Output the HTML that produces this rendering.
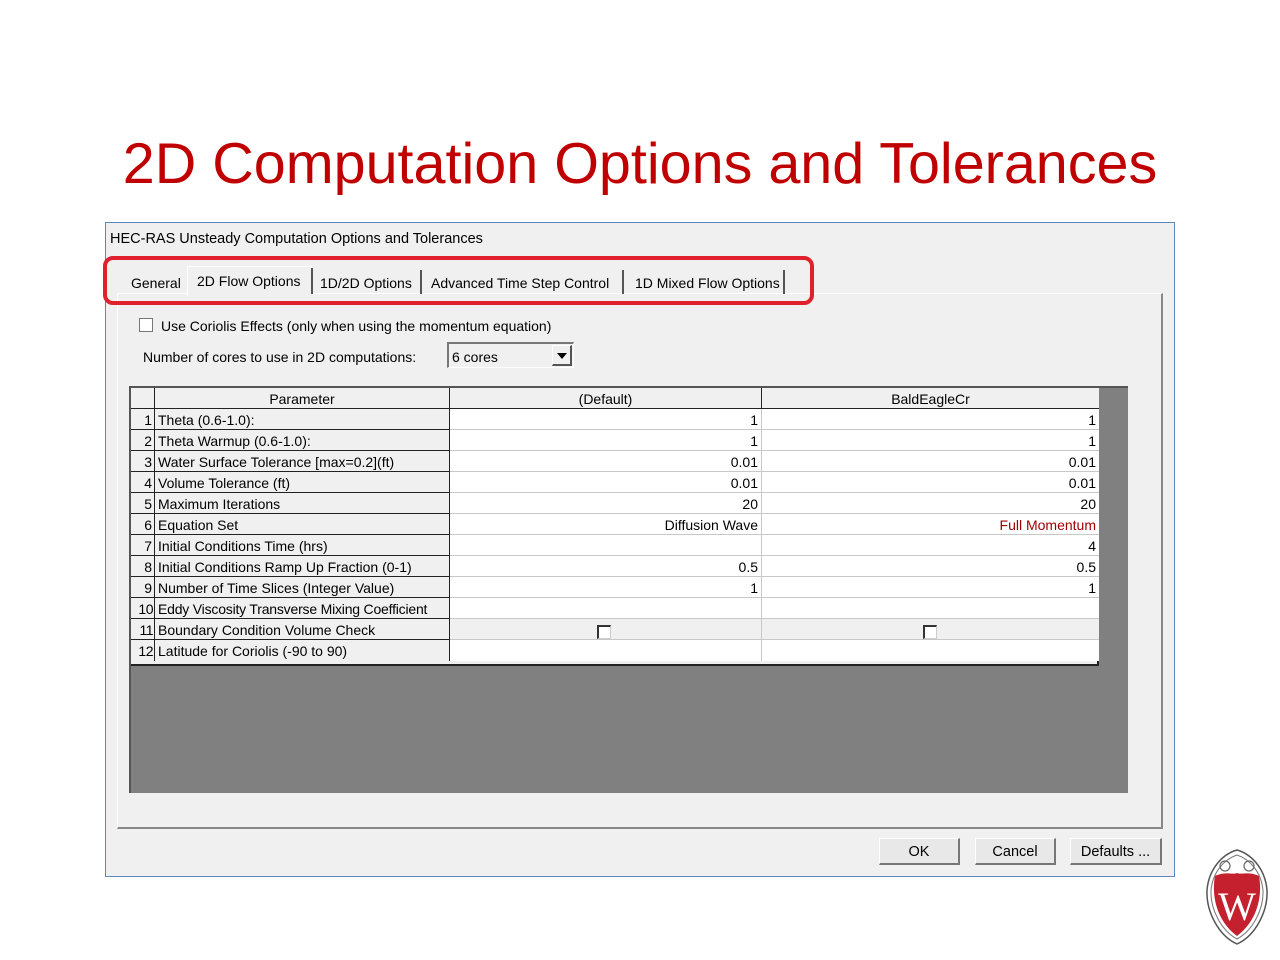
<!DOCTYPE html>
<html><head><meta charset="utf-8">
<style>
*{margin:0;padding:0;box-sizing:border-box}
body{width:1280px;height:960px;background:#fff;position:relative;overflow:hidden;font-family:"Liberation Sans",sans-serif;}
.a{position:absolute}
h1{position:absolute;left:0;width:1280px;top:131px;text-align:center;font-weight:normal;font-size:57.5px;color:#c00000;letter-spacing:0px}
.dlg{left:105px;top:222px;width:1070px;height:655px;border:1px solid #5a87c0;background:#f0f0f0}
.t{font-size:15px;color:#000;white-space:nowrap}
.tab{top:270px;height:26px;font-size:14px;padding-top:5px;white-space:nowrap}
.cell{position:absolute;height:21px;font-size:14px;line-height:23px;white-space:nowrap;overflow:hidden}
.hd{background:#f0f0f0;border-right:1px solid #222;border-bottom:1px solid #222}
.dc{background:#fff;border-right:1px solid #c8c8c8;border-bottom:1px solid #c8c8c8;text-align:right;padding-right:3px}
.btn{top:838px;height:27px;background:#e8e8e8;border-top:1px solid #fff;border-left:1px solid #fff;border-right:2px solid #777;border-bottom:2px solid #777;font-size:14.5px;text-align:center;line-height:26px}
</style></head><body>
<h1>2D Computation Options and Tolerances</h1>
<div class="a dlg"></div>
<div class="a t" style="left:110px;top:231px;font-size:14.5px">HEC-RAS Unsteady Computation Options and Tolerances</div>
<div class="a" style="left:117px;top:293px;width:1046px;height:536px;border-left:1px solid #fff;border-top:1px solid #fff;border-right:2px solid #888;border-bottom:2px solid #888"></div>
<div class="a" style="left:187px;top:266px;width:125px;height:30px;background:#f0f0f0;border-left:1px solid #fff;border-top:1px solid #fff"></div>
<div class="a tab" style="left:131px">General</div>
<div class="a tab" style="left:197px;top:268px">2D Flow Options</div>
<div class="a" style="left:311px;top:268px;width:2px;height:26px;background:#555"></div>
<div class="a tab" style="left:320px">1D/2D Options</div>
<div class="a" style="left:420px;top:270px;width:2px;height:24px;background:#555"></div>
<div class="a tab" style="left:431px">Advanced Time Step Control</div>
<div class="a" style="left:622px;top:270px;width:2px;height:24px;background:#555"></div>
<div class="a tab" style="left:635px">1D Mixed Flow Options</div>
<div class="a" style="left:783px;top:270px;width:2px;height:24px;background:#555"></div>
<div class="a" style="left:103px;top:256px;width:711px;height:49px;border:4px solid #e0202c;border-radius:10px"></div>
<div class="a" style="left:139px;top:318px;width:14px;height:14px;background:#fff;border:1px solid #777"></div>
<div class="a t" style="left:161px;top:318px;font-size:14px">Use Coriolis Effects (only when using the momentum equation)</div>
<div class="a t" style="left:143px;top:349px;font-size:14px">Number of cores to use in 2D computations:</div>
<div class="a" style="left:447px;top:342px;width:127px;height:26px;background:#f0f0f0;border-top:2px solid #777;border-left:2px solid #777;border-right:1px solid #fff;border-bottom:1px solid #fff"></div>
<div class="a t" style="left:452px;top:349px;font-size:14px">6 cores</div>
<div class="a" style="left:552px;top:345px;width:20px;height:21px;background:#f0f0f0;border-right:2px solid #555;border-bottom:2px solid #555;border-top:1px solid #fff;border-left:1px solid #fff"></div>
<div class="a" style="left:557px;top:353px;width:0;height:0;border-left:5px solid transparent;border-right:5px solid transparent;border-top:6px solid #000"></div>
<div class="a" style="left:129px;top:386px;width:999px;height:407px;background:#808080;border-top:2px solid #555;border-left:2px solid #555"></div>
<div class="a" style="left:131px;top:388px;width:968px;height:278px;background:#f0f0f0;border-right:2px solid #222;border-bottom:2px solid #222"></div>
<div class="cell hd" style="left:131px;top:388px;width:24px"></div>
<div class="cell hd" style="left:155px;top:388px;width:295px;text-align:center">Parameter</div>
<div class="cell hd" style="left:450px;top:388px;width:312px;text-align:center">(Default)</div>
<div class="cell hd" style="left:762px;top:388px;width:337px;text-align:center;border-right:none">BaldEagleCr</div>

<div class="cell hd" style="left:131px;top:409px;width:24px;text-align:right;padding-right:2px">1</div><div class="cell hd" style="left:155px;top:409px;width:295px;padding-left:3px">Theta  (0.6-1.0):</div><div class="cell dc" style="left:450px;top:409px;width:312px">1</div><div class="cell dc" style="left:762px;top:409px;width:337px;border-right:none">1</div>
<div class="cell hd" style="left:131px;top:430px;width:24px;text-align:right;padding-right:2px">2</div><div class="cell hd" style="left:155px;top:430px;width:295px;padding-left:3px">Theta Warmup  (0.6-1.0):</div><div class="cell dc" style="left:450px;top:430px;width:312px">1</div><div class="cell dc" style="left:762px;top:430px;width:337px;border-right:none">1</div>
<div class="cell hd" style="left:131px;top:451px;width:24px;text-align:right;padding-right:2px">3</div><div class="cell hd" style="left:155px;top:451px;width:295px;padding-left:3px">Water Surface Tolerance [max=0.2](ft)</div><div class="cell dc" style="left:450px;top:451px;width:312px">0.01</div><div class="cell dc" style="left:762px;top:451px;width:337px;border-right:none">0.01</div>
<div class="cell hd" style="left:131px;top:472px;width:24px;text-align:right;padding-right:2px">4</div><div class="cell hd" style="left:155px;top:472px;width:295px;padding-left:3px">Volume Tolerance (ft)</div><div class="cell dc" style="left:450px;top:472px;width:312px">0.01</div><div class="cell dc" style="left:762px;top:472px;width:337px;border-right:none">0.01</div>
<div class="cell hd" style="left:131px;top:493px;width:24px;text-align:right;padding-right:2px">5</div><div class="cell hd" style="left:155px;top:493px;width:295px;padding-left:3px">Maximum Iterations</div><div class="cell dc" style="left:450px;top:493px;width:312px">20</div><div class="cell dc" style="left:762px;top:493px;width:337px;border-right:none">20</div>
<div class="cell hd" style="left:131px;top:514px;width:24px;text-align:right;padding-right:2px">6</div><div class="cell hd" style="left:155px;top:514px;width:295px;padding-left:3px">Equation Set</div><div class="cell dc" style="left:450px;top:514px;width:312px">Diffusion Wave</div><div class="cell dc" style="left:762px;top:514px;width:337px;border-right:none;color:#a00000">Full Momentum</div>
<div class="cell hd" style="left:131px;top:535px;width:24px;text-align:right;padding-right:2px">7</div><div class="cell hd" style="left:155px;top:535px;width:295px;padding-left:3px">Initial Conditions Time (hrs)</div><div class="cell dc" style="left:450px;top:535px;width:312px"></div><div class="cell dc" style="left:762px;top:535px;width:337px;border-right:none">4</div>
<div class="cell hd" style="left:131px;top:556px;width:24px;text-align:right;padding-right:2px">8</div><div class="cell hd" style="left:155px;top:556px;width:295px;padding-left:3px">Initial Conditions Ramp Up Fraction (0-1)</div><div class="cell dc" style="left:450px;top:556px;width:312px">0.5</div><div class="cell dc" style="left:762px;top:556px;width:337px;border-right:none">0.5</div>
<div class="cell hd" style="left:131px;top:577px;width:24px;text-align:right;padding-right:2px">9</div><div class="cell hd" style="left:155px;top:577px;width:295px;padding-left:3px">Number of Time Slices (Integer Value)</div><div class="cell dc" style="left:450px;top:577px;width:312px">1</div><div class="cell dc" style="left:762px;top:577px;width:337px;border-right:none">1</div>
<div class="cell hd" style="left:131px;top:598px;width:24px;text-align:right;padding-right:1px;letter-spacing:-0.5px">10</div><div class="cell hd" style="left:155px;top:598px;width:295px;padding-left:3px;letter-spacing:-0.2px">Eddy Viscosity Transverse Mixing Coefficient</div><div class="cell dc" style="left:450px;top:598px;width:312px"></div><div class="cell dc" style="left:762px;top:598px;width:337px;border-right:none"></div>
<div class="cell hd" style="left:131px;top:619px;width:24px;text-align:right;padding-right:1px;letter-spacing:-0.5px">11</div><div class="cell hd" style="left:155px;top:619px;width:295px;padding-left:3px">Boundary Condition Volume Check</div><div class="cell dc" style="left:450px;top:619px;width:312px;background:#f0f0f0"></div><div class="cell dc" style="left:762px;top:619px;width:337px;border-right:none;background:#f0f0f0"></div>
<div class="cell hd" style="left:131px;top:640px;width:24px;text-align:right;padding-right:1px;letter-spacing:-0.5px;border-bottom:none">12</div><div class="cell hd" style="left:155px;top:640px;width:295px;padding-left:3px;border-bottom:none">Latitude for Coriolis (-90 to 90)</div><div class="cell dc" style="left:450px;top:640px;width:312px;border-bottom:none"></div><div class="cell dc" style="left:762px;top:640px;width:337px;border-right:none;border-bottom:none"></div>
<div class="a" style="left:597px;top:625px;width:14px;height:14px;background:#fff;border-top:2px solid #333;border-left:2px solid #333;border-right:1px solid #ccc;border-bottom:1px solid #ccc"></div>
<div class="a" style="left:923px;top:625px;width:14px;height:14px;background:#fff;border-top:2px solid #333;border-left:2px solid #333;border-right:1px solid #ccc;border-bottom:1px solid #ccc"></div>
<div class="a btn" style="left:879px;width:81px">OK</div>
<div class="a btn" style="left:975px;width:81px">Cancel</div>
<div class="a btn" style="left:1070px;width:92px">Defaults ...</div>
<svg class="a" style="left:1203px;top:846px" width="68" height="102" viewBox="0 0 68 102">
<path d="M34 4 C20 8 6 22 4 44 C3 66 16 90 34 98 C52 90 65 66 64 44 C62 22 48 8 34 4Z" fill="#fff" stroke="#555" stroke-width="1.5"/>
<path d="M34 9 C22 13 10 25 8 44 C7 64 19 85 34 93 C49 85 61 64 60 44 C58 25 46 13 34 9Z" fill="none" stroke="#777" stroke-width="1"/>
<circle cx="22" cy="20" r="5" fill="none" stroke="#666" stroke-width="1.2"/>
<circle cx="46" cy="20" r="5" fill="none" stroke="#666" stroke-width="1.2"/>
<path d="M12 30 C22 25 30 29 34 27 C38 29 46 25 56 30 C60 52 53 76 34 90 C15 76 8 52 12 30Z" fill="#c5202e"/>
<text x="34" y="74" text-anchor="middle" font-family="Liberation Serif,serif" font-size="40" fill="#fff">W</text>
</svg>
</body></html>
